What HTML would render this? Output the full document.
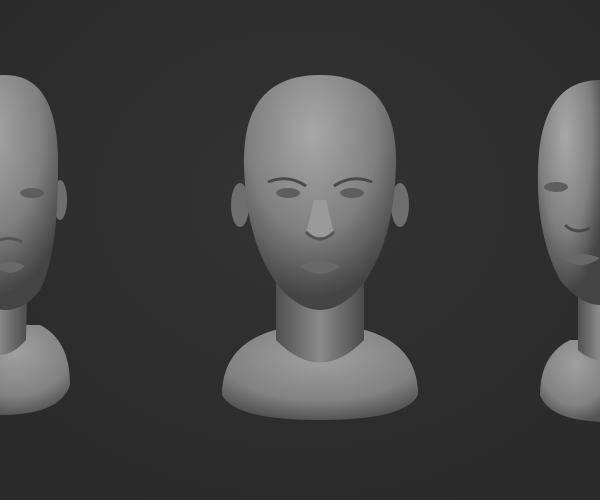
<!DOCTYPE html>
<html><head><style>html,body{margin:0;padding:0;background:#2f2f2f;width:600px;height:500px;overflow:hidden}</style></head>
<body>
<svg width="600" height="500" viewBox="0 0 600 500" xmlns="http://www.w3.org/2000/svg">
<defs>
<radialGradient id="bg" cx="50%" cy="40%" r="70%"><stop offset="0" stop-color="#333"/><stop offset="1" stop-color="#2a2a2a"/></radialGradient>
<radialGradient id="sk" cx="45%" cy="25%" r="70%"><stop offset="0" stop-color="#a8a8a8"/><stop offset="0.6" stop-color="#808080"/><stop offset="1" stop-color="#444"/></radialGradient>
<linearGradient id="neck" x1="0" x2="1"><stop offset="0" stop-color="#505050"/><stop offset="0.5" stop-color="#8a8a8a"/><stop offset="1" stop-color="#4a4a4a"/></linearGradient>
<radialGradient id="bust" cx="50%" cy="30%" r="70%"><stop offset="0" stop-color="#a0a0a0"/><stop offset="0.7" stop-color="#828282"/><stop offset="1" stop-color="#555"/></radialGradient>
</defs>
<rect width="600" height="500" fill="url(#bg)"/>
<g>
<path d="M222 395 Q222 345 275 330 L365 330 Q418 345 418 395 Q405 420 320 420 Q235 420 222 395Z" fill="url(#bust)"/>
<path d="M276 260 L276 340 Q320 385 364 340 L364 260Z" fill="url(#neck)"/>
<ellipse cx="240" cy="205" rx="9" ry="22" fill="#6e6e6e"/>
<ellipse cx="400" cy="205" rx="9" ry="22" fill="#6e6e6e"/>
<path d="M320 75 Q242 75 244 165 Q246 245 280 288 Q300 310 320 310 Q340 310 360 288 Q394 245 396 165 Q398 75 320 75Z" fill="url(#sk)"/>
<path d="M268 182 Q288 174 306 186 M334 186 Q352 174 372 182" stroke="#4a4a4a" stroke-width="3" fill="none"/>
<ellipse cx="288" cy="193" rx="12" ry="5" fill="#5e5e5e"/>
<ellipse cx="352" cy="193" rx="12" ry="5" fill="#5e5e5e"/>
<path d="M314 200 L306 234 Q320 244 334 234 L326 200" fill="#9a9a9a"/>
<path d="M306 232 Q320 246 334 232" stroke="#555" stroke-width="3" fill="none"/>
<path d="M300 266 Q320 256 340 266 Q320 282 300 266Z" fill="#686868"/>
</g>
<g>
<path d="M-40 400 Q-40 335 0 325 L40 325 Q70 340 70 385 Q60 415 0 415Z" fill="url(#bust)"/>
<path d="M-30 260 L-28 340 Q0 370 26 340 L28 260Z" fill="url(#neck)"/>
<ellipse cx="60" cy="200" rx="7" ry="20" fill="#6e6e6e"/>
<path d="M5 75 Q-70 75 -68 170 Q-66 250 -30 290 Q-10 310 5 310 Q25 310 40 290 Q58 255 58 170 Q60 75 5 75Z" fill="url(#sk)"/>
<ellipse cx="32" cy="193" rx="12" ry="5" fill="#5e5e5e"/>
<path d="M0 240 Q10 236 22 242" stroke="#555" stroke-width="3" fill="none"/>
<path d="M-5 265 Q10 258 25 266 Q10 280 -5 265Z" fill="#686868"/>
</g>
<g>
<path d="M540 395 Q540 355 570 340 L610 340 L610 422 Q550 422 540 395Z" fill="url(#bust)"/>
<path d="M578 280 L578 350 Q600 370 620 350 L620 280Z" fill="url(#neck)"/>
<path d="M600 80 Q540 80 538 170 Q536 235 560 280 Q580 305 600 305Z" fill="url(#sk)"/>
<ellipse cx="556" cy="187" rx="12" ry="5" fill="#5e5e5e"/>
<path d="M565 225 Q575 235 590 228" stroke="#4a4a4a" stroke-width="3" fill="none"/>
<path d="M563 258 Q580 250 600 258 Q580 272 563 258Z" fill="#686868"/>
</g>
</svg>
</body></html>
